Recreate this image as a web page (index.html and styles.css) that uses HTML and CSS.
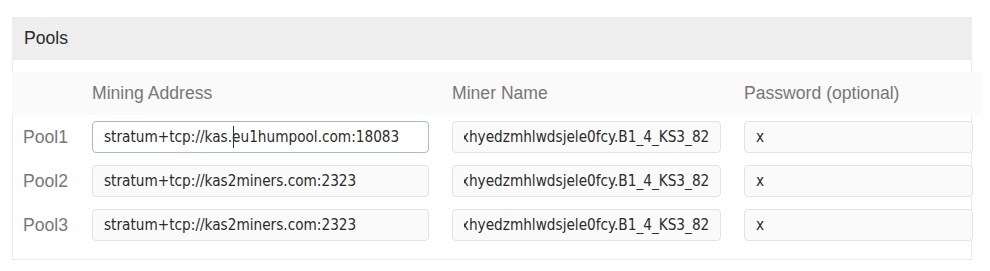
FILE: index.html
```html
<!DOCTYPE html>
<html lang="en">

<head>
    <meta charset="UTF-8">
    <meta name="viewport" content="width=device-width, initial-scale=1.0">
    <title>Pools</title>
    <link rel="stylesheet" href="styles.css">
</head>

<body>
    <div class="panel">
        <div class="panel-heading">Pools</div>
        <div class="panel-body">
            <div class="pool-row pool-head">
                <div class="pool-label"></div>
                <div class="col-address">Mining Address</div>
                <div class="col-miner">Miner Name</div>
                <div class="col-pass">Password (optional)</div>
            </div>
            <div class="pool-row">
                <div class="pool-label">Pool1</div>
                <div class="field-wrap col-address">
                    <input class="field editing" type="text" value="stratum+tcp://kas.eu1humpool.com:18083">
                    <span class="caret"></span>
                </div>
                <input class="field col-miner miner" type="text" value="kaspa:qrm5xhyedzmhlwdsjele0fcy.B1_4_KS3_82">
                <input class="field col-pass" type="text" value="x">
            </div>
            <div class="pool-row">
                <div class="pool-label">Pool2</div>
                <input class="field col-address" type="text" value="stratum+tcp://kas2miners.com:2323">
                <input class="field col-miner miner" type="text" value="kaspa:qrm5xhyedzmhlwdsjele0fcy.B1_4_KS3_82">
                <input class="field col-pass" type="text" value="x">
            </div>
            <div class="pool-row">
                <div class="pool-label">Pool3</div>
                <input class="field col-address" type="text" value="stratum+tcp://kas2miners.com:2323">
                <input class="field col-miner miner" type="text" value="kaspa:qrm5xhyedzmhlwdsjele0fcy.B1_4_KS3_82">
                <input class="field col-pass" type="text" value="x">
            </div>
        </div>
    </div>

    <script>
        // long miner names are scrolled to the end like after typing
        document.querySelectorAll('.miner').forEach(input => {
            input.scrollLeft = input.scrollWidth;
        });
    </script>
</body>

</html>
```

FILE: styles.css
```css
body {
    margin: 0;
    padding: 17px 0 0 12px;
    background: #fff;
    font-family: "Liberation Sans", Arial, sans-serif;
}

.panel {
    width: 960px;
    box-sizing: border-box;
    border: 1px solid #ebebeb;
    border-top: none;
}

.panel-heading {
    height: 43px;
    margin: 0 -1px;
    padding-left: 12px;
    display: flex;
    align-items: center;
    background-color: #eeeeee;
    color: #2a2a2a;
    font-size: 17.6px;
}

.panel-body {
    padding: 12px 0 18px;
}

.pool-row {
    display: flex;
    align-items: center;
    gap: 23px;
    width: 970px;
    margin-left: -1px;
    height: 32px;
    margin-bottom: 12px;
}

.pool-row:last-child {
    margin-bottom: 0;
}

.pool-head {
    height: 43px;
    margin-bottom: 6px;
    background-color: #fafafa;
    color: #777;
    font-size: 17.6px;
}

.pool-label {
    width: 80px;
    margin-right: -23px;
    padding-left: 11px;
    box-sizing: border-box;
    color: #777;
    font-size: 17.6px;
}

.col-address {
    width: 337px;
}

.col-miner {
    width: 269px;
}

.col-pass {
    width: 229px;
}

.field {
    box-sizing: border-box;
    height: 32px;
    margin: 0;
    padding: 0 11px;
    border: 1px solid #e3e3e3;
    border-radius: 4px;
    background-color: #fafafa;
    color: #2b2b2b;
    font-family: "DejaVu Sans Condensed", "DejaVu Sans", sans-serif;
    font-stretch: condensed;
    font-size: 15.2px;
}

.field:focus {
    outline: none;
}

.field-wrap {
    position: relative;
    height: 32px;
}

.field-wrap .field {
    width: 100%;
}

.field.editing {
    border-color: #a3b9df;
    background-color: #fff;
}

.caret {
    position: absolute;
    left: 141px;
    top: 5px;
    width: 1px;
    height: 22px;
    background-color: #333;
}
```
